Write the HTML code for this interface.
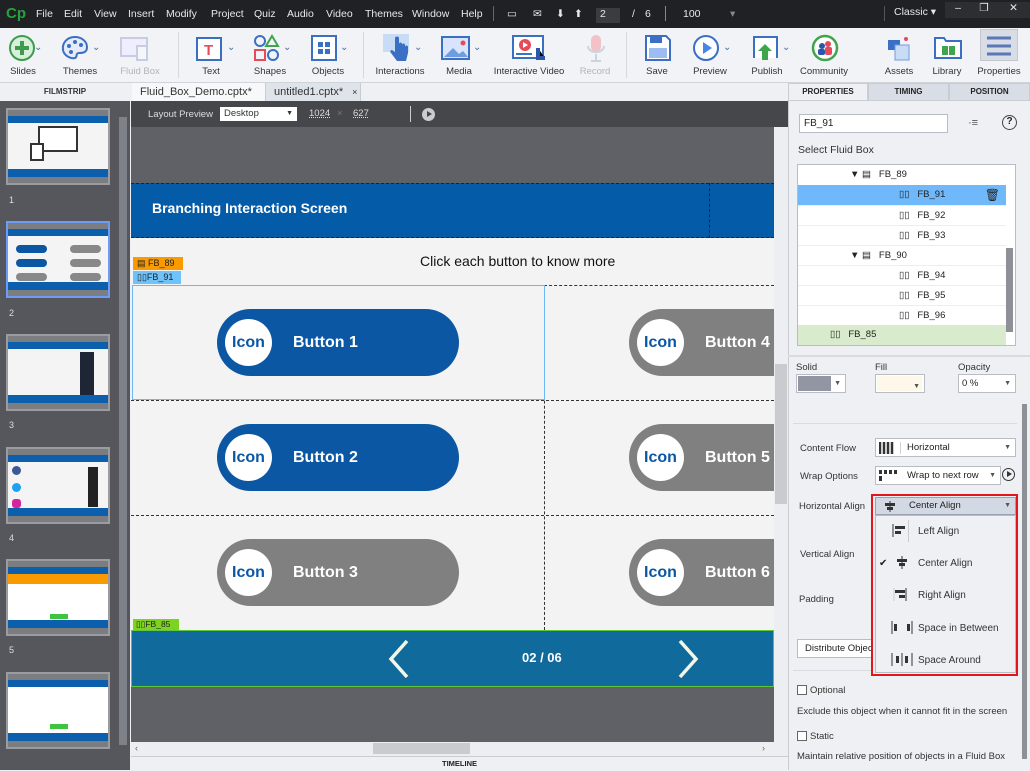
<!DOCTYPE html>
<html><head><meta charset="utf-8"><style>
*{box-sizing:border-box;margin:0;padding:0}
body{width:1030px;height:770px;overflow:hidden;font-family:"Liberation Sans",sans-serif;font-size:10px;color:#222;background:#eef0f4;position:relative}
.a{position:absolute}
.menu{left:0;top:0;width:1030px;height:28px;background:#1f2124;color:#e8e8e8;font-size:10.5px}
.menu span{position:absolute;top:8px}
.tb{left:0;top:28px;width:1030px;height:55px;background:#f1f3f6;border-bottom:1px solid #d0d3d8}
.tl{position:absolute;top:38px;font-size:9.5px;color:#333;text-align:center;width:80px;margin-left:-40px}
.ic{position:absolute;top:6px}
.thumb{position:absolute;left:6px;width:104px;height:77px;border:2px solid #9a9ca0;background:#f4f4f4}
.thumb .h{position:absolute;left:0;top:6px;width:100%;height:7px;background:#0b5fad}
.thumb .f{position:absolute;left:0;bottom:6px;width:100%;height:8px;background:#0b5fad}
.thumb .t{position:absolute;left:0;top:0;width:100%;height:6px;background:#7b7d80}
.thumb .b{position:absolute;left:0;bottom:0;width:100%;height:6px;background:#7b7d80}
.num{position:absolute;left:9px;color:#ddd;font-size:9px}
.pill{position:absolute;height:67px;border-radius:34px;color:#fff;font-size:16px;font-weight:bold}
.pill .c{position:absolute;left:8px;top:10px;width:47px;height:47px;border-radius:50%;background:#fff;color:#0b57a4;font-size:16px;font-weight:bold;text-align:center;line-height:47px}
.pill .l{position:absolute;left:76px;top:25px}
.row{position:absolute;left:798px;width:208px;height:20px;font-size:9.5px;padding-left:101px;line-height:20px}
.lab{position:absolute;left:800px;font-size:9.5px;color:#333;white-space:nowrap}
.sel{position:absolute;background:#fff;border:1px solid #b8bcc4;height:19px;font-size:9.5px;line-height:17px;white-space:nowrap;overflow:hidden}
.mi{position:absolute;left:918px;font-size:10px;color:#333}
</style></head><body>
<div class="a menu">
<span style="left:6px;top:5px;color:#27a33b;font-size:15px;font-weight:bold">Cp</span>
<span style="left:36px">File</span><span style="left:64px">Edit</span><span style="left:94px">View</span><span style="left:128px">Insert</span><span style="left:166px">Modify</span><span style="left:211px">Project</span><span style="left:254px">Quiz</span><span style="left:287px">Audio</span><span style="left:326px">Video</span><span style="left:365px">Themes</span><span style="left:412px">Window</span><span style="left:461px">Help</span>
<span style="left:493px;top:6px;width:1px;height:15px;background:#666"></span>
<span style="left:507px">▭</span><span style="left:533px">✉</span><span style="left:556px">⬇</span><span style="left:574px">⬆</span>
<span style="left:596px;top:8px;width:24px;height:15px;background:#3a3c40;padding-left:4px;top:8px">2</span>
<span style="left:632px">/</span><span style="left:645px">6</span><span style="left:665px;top:6px;width:1px;height:15px;background:#888"></span><span style="left:683px">100</span><span style="left:730px;color:#888">▾</span>
<span style="left:884px;top:6px;width:1px;height:15px;background:#555"></span>
<span style="left:894px;top:6px">Classic ▾</span>
<span style="left:945px;top:0;width:26px;height:16px;background:#2c2e31;text-align:center;top:2px">–</span>
<span style="left:971px;top:2px;width:26px;height:16px;background:#2c2e31;text-align:center">❐</span>
<span style="left:997px;top:2px;width:33px;height:16px;background:#2c2e31;text-align:center">✕</span>
</div>
<div class="a tb">
<svg class="ic" style="left:8px" width="30" height="28"><circle cx="14" cy="14" r="12" fill="#d7f0dc" stroke="#3e9a4d" stroke-width="2"/><path d="M14 7v14M7 14h14" stroke="#3e9a4d" stroke-width="4"/></svg><span class="a" style="left:34px;top:14px;color:#4a6ea8">⌄</span>
<svg class="ic" style="left:60px" width="30" height="28"><path d="M15 3C6 3 2 10 3 16s8 9 12 8c3-1 0-5 4-5 5 0 8-1 8-6 0-6-6-10-12-10z" fill="#e6ecf7" stroke="#3b6fc4" stroke-width="2"/><circle cx="9" cy="12" r="2" fill="#3b6fc4"/><circle cx="15" cy="8" r="2" fill="#3b6fc4"/><circle cx="21" cy="11" r="2" fill="#3b6fc4"/><circle cx="11" cy="18" r="2" fill="#3b6fc4"/></svg><span class="a" style="left:92px;top:14px;color:#4a6ea8">⌄</span>
<svg class="ic" style="left:120px" width="34" height="28"><rect x="1" y="4" width="26" height="18" fill="#eef" stroke="#c6cde0" stroke-width="2"/><rect x="17" y="12" width="10" height="14" fill="#f5f6fa" stroke="#c6cde0" stroke-width="2"/></svg>
<div class="a" style="left:178px;top:4px;width:1px;height:46px;background:#d5d8de"></div>
<svg class="ic" style="left:195px" width="30" height="28"><rect x="2" y="4" width="24" height="22" fill="#fff" stroke="#3b6fc4" stroke-width="2"/><text x="9" y="21" fill="#e64b5a" font-size="15" font-weight="bold" font-family="Liberation Sans">T</text></svg><span class="a" style="left:227px;top:14px;color:#4a6ea8">⌄</span>
<svg class="ic" style="left:253px" width="30" height="28"><circle cx="7" cy="7" r="5" fill="none" stroke="#3b6fc4" stroke-width="2"/><path d="M19 2l6 10h-12z" fill="none" stroke="#3ea54d" stroke-width="2"/><rect x="2" y="16" width="10" height="10" fill="none" stroke="#e64b5a" stroke-width="2"/><circle cx="20" cy="21" r="5" fill="none" stroke="#3b6fc4" stroke-width="2"/></svg><span class="a" style="left:283px;top:14px;color:#4a6ea8">⌄</span>
<svg class="ic" style="left:310px" width="30" height="28"><rect x="2" y="2" width="24" height="24" fill="#fff" stroke="#3b6fc4" stroke-width="2"/><rect x="8" y="8" width="5" height="5" fill="#3b6fc4"/><rect x="15" y="8" width="5" height="5" fill="#3b6fc4"/><rect x="8" y="15" width="5" height="5" fill="#3b6fc4"/><rect x="15" y="15" width="5" height="5" fill="#3b6fc4"/></svg><span class="a" style="left:340px;top:14px;color:#4a6ea8">⌄</span>
<div class="a" style="left:363px;top:4px;width:1px;height:46px;background:#d5d8de"></div>
<div class="a" style="left:383px;top:6px;width:26px;height:18px;background:#c8dcf5"></div>
<svg class="ic" style="left:385px" width="26" height="30"><path d="M10 4v14l-3-2c-2 0-2 2-1 3l6 8h9l2-8v-6c0-2-3-2-3 0v-2c0-2-3-2-3 0v-1c0-2-3-2-3 0V4c0-2-4-2-4 0z" fill="#3b6fc4"/></svg><span class="a" style="left:414px;top:14px;color:#4a6ea8">⌄</span>
<svg class="ic" style="left:441px" width="30" height="28"><rect x="1" y="3" width="27" height="22" fill="#d7e4fb" stroke="#3b6fc4" stroke-width="2"/><path d="M3 23l9-9 6 6 4-3 5 6z" fill="#6f9be0"/><circle cx="22" cy="9" r="2.5" fill="#e64b5a"/></svg><span class="a" style="left:473px;top:14px;color:#4a6ea8">⌄</span>
<svg class="ic" style="left:512px" width="34" height="30"><rect x="1" y="2" width="30" height="22" fill="#fff" stroke="#3b6fc4" stroke-width="2"/><circle cx="13" cy="11" r="6" fill="#e64b5a"/><path d="M11 8l5 3-5 3z" fill="#fff"/><path d="M4 20h16" stroke="#3b6fc4" stroke-width="2"/><path d="M26 14v10h7" stroke="#2a57a8" stroke-width="4"/></svg>
<svg class="ic" style="left:586px" width="20" height="30"><rect x="5" y="1" width="10" height="17" rx="5" fill="#f2c2c8"/><path d="M2 12c0 8 16 8 16 0M10 20v6M5 27h10" stroke="#cdd3de" stroke-width="2" fill="none"/></svg>
<div class="a" style="left:626px;top:4px;width:1px;height:46px;background:#d5d8de"></div>
<svg class="ic" style="left:644px" width="28" height="28"><path d="M2 2h20l4 4v20H2z" fill="#fff" stroke="#3b6fc4" stroke-width="2"/><rect x="6" y="2" width="12" height="7" fill="#3b6fc4"/><rect x="5" y="14" width="18" height="10" fill="#9dbdf0"/></svg>
<svg class="ic" style="left:693px" width="28" height="28"><circle cx="13" cy="14" r="12" fill="#fff" stroke="#3b6fc4" stroke-width="2"/><path d="M10 8l9 6-9 6z" fill="#4a86e8"/></svg><span class="a" style="left:723px;top:14px;color:#4a6ea8">⌄</span>
<svg class="ic" style="left:750px" width="30" height="28"><path d="M4 24V3h23v21" fill="#fff" stroke="#3b6fc4" stroke-width="2"/><path d="M15 10l7 7h-4v9h-6v-9h-4z" fill="#3ea54d"/></svg><span class="a" style="left:782px;top:14px;color:#4a6ea8">⌄</span>
<svg class="ic" style="left:811px" width="28" height="28"><circle cx="14" cy="14" r="12" fill="#fff" stroke="#3ea54d" stroke-width="2.5"/><circle cx="11" cy="12" r="3" fill="#2a57a8"/><circle cx="17" cy="10" r="3" fill="#e64b5a"/><rect x="7" y="15" width="7" height="6" rx="2" fill="#2a57a8"/><rect x="14" y="13" width="7" height="8" rx="2" fill="#e64b5a"/></svg>
<svg class="ic" style="left:886px" width="28" height="28"><rect x="2" y="6" width="12" height="10" fill="#3b6fc4"/><rect x="9" y="11" width="14" height="15" fill="#c8dcf5" stroke="#6f9be0"/><circle cx="20" cy="5" r="2" fill="#e64b5a"/></svg>
<svg class="ic" style="left:933px" width="30" height="28"><path d="M2 4h9l2 3h15v17H2z" fill="#fff" stroke="#3b6fc4" stroke-width="2"/><path d="M9 12h6v9H9zM16 12h6v9h-6z" fill="#3ea54d"/></svg>
<div class="a" style="left:980px;top:1px;width:38px;height:32px;background:#d8dce4;border:1px solid #c2c7d0"></div>
<svg class="ic" style="left:986px;top:7px" width="26" height="22"><path d="M1 3h24M1 11h24M1 19h24" stroke="#5a78b8" stroke-width="3"/></svg>
<span class="tl" style="left:23px">Slides</span><span class="tl" style="left:80px">Themes</span><span class="tl" style="left:140px;color:#b0b4bc">Fluid Box</span><span class="tl" style="left:211px">Text</span><span class="tl" style="left:270px">Shapes</span><span class="tl" style="left:328px">Objects</span><span class="tl" style="left:400px">Interactions</span><span class="tl" style="left:459px">Media</span><span class="tl" style="left:529px">Interactive Video</span><span class="tl" style="left:595px;color:#b0b4bc">Record</span><span class="tl" style="left:657px">Save</span><span class="tl" style="left:710px">Preview</span><span class="tl" style="left:767px">Publish</span><span class="tl" style="left:824px">Community</span><span class="tl" style="left:899px">Assets</span><span class="tl" style="left:947px">Library</span><span class="tl" style="left:999px">Properties</span>
</div>
<div class="a" style="left:0;top:83px;width:130px;height:18px;background:#eef0f4;font-size:8px;font-weight:bold;text-align:center;line-height:18px;color:#333">FILMSTRIP</div>
<div class="a" style="left:130px;top:83px;width:658px;height:18px;background:#eef0f4"></div>
<div class="a" style="left:132px;top:83px;width:134px;height:18px;background:#f7f8fa;border-right:1px solid #c8ccd3;font-size:11px;line-height:18px;padding-left:8px;color:#333">Fluid_Box_Demo.cptx* <span style="font-size:9px;margin-left:6px">×</span></div>
<div class="a" style="left:266px;top:83px;width:95px;height:18px;background:#dfe3ea;border-right:1px solid #c8ccd3;font-size:11px;line-height:18px;padding-left:8px;color:#333">untitled1.cptx* <span style="font-size:9px;margin-left:6px">×</span></div>
<div class="a" style="left:788px;top:83px;width:80px;height:18px;background:#eef0f4;border:1px solid #c8ccd3;font-size:8px;font-weight:bold;text-align:center;line-height:16px">PROPERTIES</div>
<div class="a" style="left:868px;top:83px;width:81px;height:18px;background:#d9dee6;border:1px solid #c8ccd3;font-size:8px;font-weight:bold;text-align:center;line-height:16px">TIMING</div>
<div class="a" style="left:949px;top:83px;width:81px;height:18px;background:#d9dee6;border:1px solid #c8ccd3;font-size:8px;font-weight:bold;text-align:center;line-height:16px">POSITION</div>
<div class="a" style="left:0;top:101px;width:130px;height:669px;background:#55575c"></div>
<div class="a" style="left:119px;top:117px;width:8px;height:628px;background:#7f8189"></div>
<div class="thumb" style="top:108px"><div class="t"></div><div class="h"></div><div style="position:absolute;left:30px;top:16px;width:40px;height:26px;border:2px solid #333;background:#fff"></div><div style="position:absolute;left:22px;top:33px;width:14px;height:18px;border:2px solid #333;background:#fff"></div><div class="f"></div><div class="b"></div></div>
<div class="num" style="top:195px">1</div>
<div class="thumb" style="top:221px;border:2px solid #6d9bf7"><div class="t"></div><div class="h"></div>
<div style="position:absolute;left:8px;top:22px;width:31px;height:8px;border-radius:4px;background:#0b57a4"></div><div style="position:absolute;left:62px;top:22px;width:31px;height:8px;border-radius:4px;background:#888"></div>
<div style="position:absolute;left:8px;top:36px;width:31px;height:8px;border-radius:4px;background:#0b57a4"></div><div style="position:absolute;left:62px;top:36px;width:31px;height:8px;border-radius:4px;background:#888"></div>
<div style="position:absolute;left:8px;top:50px;width:31px;height:8px;border-radius:4px;background:#888"></div><div style="position:absolute;left:62px;top:50px;width:31px;height:8px;border-radius:4px;background:#888"></div>
<div class="f"></div><div class="b"></div></div>
<div class="num" style="top:308px">2</div>
<div class="thumb" style="top:334px"><div class="t"></div><div class="h"></div><div style="position:absolute;left:72px;top:16px;width:14px;height:44px;background:#1e2636"></div><div class="f"></div><div class="b"></div></div>
<div class="num" style="top:420px">3</div>
<div class="thumb" style="top:447px"><div class="t"></div><div class="h"></div><div style="position:absolute;left:4px;top:17px;width:9px;height:9px;border-radius:50%;background:#3b5998"></div><div style="position:absolute;left:4px;top:34px;width:9px;height:9px;border-radius:50%;background:#1da1f2"></div><div style="position:absolute;left:4px;top:50px;width:9px;height:9px;border-radius:3px;background:#d6249f"></div><div style="position:absolute;left:80px;top:18px;width:10px;height:40px;background:#222"></div><div class="f"></div><div class="b"></div></div>
<div class="num" style="top:533px">4</div>
<div class="thumb" style="top:559px;background:#fff"><div class="t"></div><div class="h"></div><div style="position:absolute;left:0;top:13px;width:100%;height:10px;background:#f89a00"></div><div style="position:absolute;left:42px;top:53px;width:18px;height:5px;background:#3ec43e"></div><div class="f"></div><div class="b"></div></div>
<div class="num" style="top:645px">5</div>
<div class="thumb" style="top:672px;background:#fff"><div class="t"></div><div class="h"></div><div style="position:absolute;left:42px;top:50px;width:18px;height:5px;background:#3ec43e"></div><div class="f"></div><div class="b"></div></div>
<div class="a" style="left:131px;top:101px;width:657px;height:26px;background:#45474b;color:#ddd;font-size:9.5px">
<span class="a" style="left:17px;top:8px">Layout Preview</span>
<span class="a" style="left:89px;top:6px;width:77px;height:14px;background:#fff;color:#333;padding-left:4px;line-height:14px">Desktop<span style="position:absolute;right:4px;font-size:7px">▼</span></span>
<span class="a" style="left:178px;top:7px;text-decoration:underline dotted">1024</span><span class="a" style="left:206px;top:7px;color:#777">×</span><span class="a" style="left:222px;top:7px;text-decoration:underline dotted">627</span>
<span class="a" style="left:279px;top:5px;width:1px;height:16px;background:#ccc"></span>
<span class="a" style="left:291px;top:7px;width:13px;height:13px;border-radius:50%;background:#ccc"></span><span class="a" style="left:296px;top:10px;width:0;height:0;border-left:5px solid #45474b;border-top:3.5px solid transparent;border-bottom:3.5px solid transparent"></span>
</div>
<div class="a" style="left:131px;top:127px;width:643px;height:615px;background:#5f6166"></div>
<div class="a" style="left:774px;top:127px;width:14px;height:615px;background:#eceef1"></div>
<div class="a" style="left:775px;top:364px;width:12px;height:140px;background:#c9cbcf"></div>
<div class="a" style="left:131px;top:183px;width:643px;height:55px;background:#045ca8;border-top:1px dashed #222;border-bottom:1px dashed #222"></div>
<div class="a" style="left:709px;top:183px;height:55px;border-left:1px dashed #222"></div>
<div class="a" style="left:152px;top:200px;color:#fff;font-size:14px;font-weight:bold">Branching Interaction Screen</div>
<div class="a" style="left:131px;top:238px;width:643px;height:392px;background:#f3f3f3"></div>
<div class="a" style="left:420px;top:253px;font-size:14px;color:#111">Click each button to know more</div>
<div class="a" style="left:544px;top:285px;width:230px;border-top:1px dashed #333"></div>
<div class="a" style="left:131px;top:400px;width:643px;border-top:1px dashed #333"></div>
<div class="a" style="left:131px;top:515px;width:643px;border-top:1px dashed #333"></div>
<div class="a" style="left:544px;top:285px;height:345px;border-left:1px dashed #333"></div>
<div class="a" style="left:132px;top:285px;width:413px;height:115px;border:1px solid #6bb8f5"></div>
<div class="a" style="left:133px;top:257px;width:50px;height:13px;background:#f89a00;font-size:9px;line-height:13px;padding-left:4px">▤ FB_89</div>
<div class="a" style="left:133px;top:271px;width:48px;height:13px;background:#6fc2fa;font-size:9px;line-height:13px;padding-left:4px">▯▯FB_91</div>
<div class="pill" style="left:217px;top:309px;width:242px;background:#0b57a4"><div class="c">Icon</div><div class="l">Button 1</div></div>
<div class="pill" style="left:217px;top:424px;width:242px;background:#0b57a4"><div class="c">Icon</div><div class="l">Button 2</div></div>
<div class="pill" style="left:217px;top:539px;width:242px;background:#808080"><div class="c">Icon</div><div class="l">Button 3</div></div>
<div class="a" style="left:544px;top:290px;width:230px;height:340px;overflow:hidden">
<div class="pill" style="left:85px;top:19px;width:242px;background:#808080"><div class="c">Icon</div><div class="l">Button 4</div></div>
<div class="pill" style="left:85px;top:134px;width:242px;background:#808080"><div class="c">Icon</div><div class="l">Button 5</div></div>
<div class="pill" style="left:85px;top:249px;width:242px;background:#808080"><div class="c">Icon</div><div class="l">Button 6</div></div>
</div>
<div class="a" style="left:133px;top:619px;width:46px;height:11px;background:#7ed321;font-size:8.5px;line-height:11px;padding-left:3px">▯▯FB_85</div>
<div class="a" style="left:131px;top:630px;width:643px;height:57px;background:#116a9c;border:1px solid #5fc73a"></div>
<svg class="a" style="left:385px;top:638px" width="330" height="42"><path d="M22 3L6 21l16 18" stroke="#f4f7e6" stroke-width="3.5" fill="none"/><path d="M295 3l16 18-16 18" stroke="#f4f7e6" stroke-width="3.5" fill="none"/></svg>
<div class="a" style="left:522px;top:650px;color:#fff;font-size:13px;font-weight:bold">02 / 06</div>
<div class="a" style="left:131px;top:742px;width:657px;height:14px;background:#eceef1;font-size:9px;color:#666"><span class="a" style="left:4px;top:1px">‹</span><span class="a" style="left:242px;top:1px;width:97px;height:11px;background:#c9cbcf"></span><span class="a" style="left:631px;top:1px">›</span></div>
<div class="a" style="left:131px;top:756px;width:657px;height:14px;background:#eef0f4;border-top:1px solid #c8ccd3;font-size:7.5px;font-weight:bold;text-align:center;line-height:14px">TIMELINE</div>
<div class="a" style="left:788px;top:101px;width:242px;height:669px;background:#eef0f4;border-left:1px solid #c8ccd3"></div>
<div class="a" style="left:799px;top:114px;width:149px;height:19px;background:#fff;border:1px solid #b8bcc4;font-size:10px;line-height:17px;padding-left:4px">FB_91</div>
<div class="a" style="left:968px;top:117px;font-size:11px;color:#555">·≡</div>
<div class="a" style="left:1002px;top:115px;width:15px;height:15px;border:1.5px solid #444;border-radius:50%;font-size:10px;text-align:center;line-height:12px;font-weight:bold">?</div>
<div class="a" style="left:798px;top:144px;font-size:10.5px;color:#333">Select Fluid Box</div>
<div class="a" style="left:797px;top:164px;width:219px;height:182px;background:#fff;border:1px solid #b8bcc4"></div>
<div class="a" style="left:1006px;top:248px;width:7px;height:84px;background:#8d9096"></div>
<div class="row" style="top:165px;padding-left:52px">▼ ▤ &nbsp; FB_89</div>
<div class="row" style="top:185px;background:#6fb8fa">▯▯ &nbsp; FB_91<span style="position:absolute;right:6px;font-size:12px">🗑</span></div>
<div class="row" style="top:205px;border-top:1px solid #eee">▯▯ &nbsp; FB_92</div>
<div class="row" style="top:225px;border-top:1px solid #eee">▯▯ &nbsp; FB_93</div>
<div class="row" style="top:245px;padding-left:52px;border-top:1px solid #eee">▼ ▤ &nbsp; FB_90</div>
<div class="row" style="top:265px;border-top:1px solid #eee">▯▯ &nbsp; FB_94</div>
<div class="row" style="top:285px;border-top:1px solid #eee">▯▯ &nbsp; FB_95</div>
<div class="row" style="top:305px;border-top:1px solid #eee">▯▯ &nbsp; FB_96</div>
<div class="row" style="top:325px;background:#d9ebcd;padding-left:32px">▯▯ &nbsp; FB_85</div>
<div class="a" style="left:788px;top:355px;width:242px;border-top:2px solid #d8dbe0"></div>
<div class="lab" style="left:796px;top:362px">Solid</div><div class="lab" style="left:875px;top:362px">Fill</div><div class="lab" style="left:958px;top:362px">Opacity</div>
<div class="sel" style="left:796px;top:374px;width:50px;height:19px"><span class="a" style="left:1px;top:1px;width:33px;height:15px;background:#9196a2"></span><span class="a" style="right:4px;font-size:7px;color:#555">▼</span></div>
<div class="sel" style="left:875px;top:374px;width:50px;height:19px"><span class="a" style="left:1px;top:1px;width:45px;height:15px;background:#fdf8ea"></span><span class="a" style="right:4px;top:3px;font-size:7px;color:#555">▼</span></div>
<div class="sel" style="left:958px;top:374px;width:58px;height:19px;padding-left:3px">0 %<span class="a" style="right:4px;font-size:7px;color:#555">▼</span></div>
<div class="a" style="left:1022px;top:404px;width:5px;height:355px;background:#8d9096"></div>
<div class="a" style="left:793px;top:423px;width:224px;border-top:1px solid #d8dbe0"></div>
<div class="lab" style="top:443px">Content Flow</div>
<div class="sel" style="left:875px;top:438px;width:141px"><svg class="a" style="left:3px;top:3px" width="22" height="12"><path d="M1 0v12M5 0v12M9 0v12M13 0v12" stroke="#333" stroke-width="2.5"/><path d="M22 0v12" stroke="#aaa"/></svg><span class="a" style="left:31px">Horizontal</span><span class="a" style="right:4px;font-size:7px;color:#555">▼</span></div>
<div class="lab" style="top:471px">Wrap Options</div>
<div class="sel" style="left:875px;top:466px;width:126px"><svg class="a" style="left:3px;top:3px" width="24" height="12"><path d="M0 0h3v4H0zM5 0h3v4H5zM10 0h3v4h-3zM15 0h3v4h-3zM0 6h3v5H0z" fill="#333"/></svg><span class="a" style="left:31px">Wrap to next row</span><span class="a" style="right:4px;font-size:7px;color:#555">▼</span></div>
<div class="a" style="left:1002px;top:468px;width:13px;height:13px;border:1.5px solid #333;border-radius:50%"></div><div class="a" style="left:1007px;top:471px;border-left:5px solid #333;border-top:3.5px solid transparent;border-bottom:3.5px solid transparent"></div>
<div class="lab" style="left:799px;top:501px">Horizontal Align</div>
<div class="lab" style="top:549px">Vertical Align</div>
<div class="lab" style="left:799px;top:594px">Padding</div>
<div class="sel" style="left:797px;top:639px;width:80px;padding-left:7px">Distribute Objects</div>
<div class="a" style="left:793px;top:670px;width:224px;border-top:1px solid #d8dbe0"></div>
<div class="a" style="left:797px;top:685px;width:10px;height:10px;border:1px solid #666;background:#fff"></div><div class="lab" style="left:810px;top:685px">Optional</div>
<div class="lab" style="left:797px;top:706px">Exclude this object when it cannot fit in the screen</div>
<div class="a" style="left:797px;top:731px;width:10px;height:10px;border:1px solid #666;background:#fff"></div><div class="lab" style="left:810px;top:731px">Static</div>
<div class="lab" style="left:797px;top:751px">Maintain relative position of objects in a Fluid Box</div>
<div class="a" style="left:871px;top:494px;width:147px;height:182px;border:2px solid #e4151b;background:#eef0f4"></div>
<div class="a" style="left:875px;top:497px;width:141px;height:18px;background:#d2d8e4;border:1px solid #9aa2b0;font-size:9.5px;line-height:16px;padding-left:33px">Center Align<svg class="a" style="left:8px;top:3px" width="12" height="11"><path d="M6 0v11" stroke="#333"/><path d="M1 2h10v3H1zM3 6h6v3H3z" fill="#333"/></svg><span class="a" style="right:4px;font-size:7px;color:#555">▼</span></div>
<div class="a" style="left:875px;top:515px;width:141px;height:158px;background:#eef0f4;border:1px solid #b8bcc4"></div>
<div class="a" style="left:908px;top:520px;height:22px;border-left:1px solid #ccc"></div>
<svg class="a" style="left:892px;top:524px" width="14" height="13"><path d="M1 0v13" stroke="#333"/><path d="M3 2h10v3H3zM3 7h6v3H3z" fill="#333"/></svg><div class="mi" style="top:526px">Left Align</div>
<div class="a" style="left:879px;top:558px;font-size:10px">✔</div>
<svg class="a" style="left:895px;top:556px" width="14" height="13"><path d="M7 0v13" stroke="#333"/><path d="M2 3h10v3H2zM4 7h6v3H4z" fill="#333"/></svg><div class="mi" style="top:558px">Center Align</div>
<svg class="a" style="left:893px;top:588px" width="14" height="13"><path d="M1 0v13" stroke="#ccc"/><path d="M13 0v13" stroke="#333"/><path d="M2 2h10v3H2zM6 7h6v3H6z" fill="#333"/></svg><div class="mi" style="top:590px">Right Align</div>
<svg class="a" style="left:891px;top:621px" width="22" height="13"><path d="M1 0v13M21 0v13" stroke="#333"/><path d="M3 3h3v7H3zM16 3h3v7h-3z" fill="#333"/></svg><div class="mi" style="top:623px">Space in Between</div>
<svg class="a" style="left:891px;top:653px" width="22" height="13"><path d="M1 0v13M11 0v13M21 0v13" stroke="#333"/><path d="M5 3h3v7H5zM14 3h3v7h-3z" fill="#333"/></svg><div class="mi" style="top:655px">Space Around</div>
</body></html>
